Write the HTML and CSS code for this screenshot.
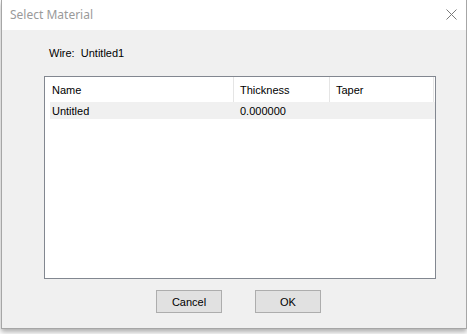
FILE: index.html
```html
<!DOCTYPE html>
<html lang="en">
<head>
    <meta charset="UTF-8">
    <title>Select Material</title>
    <link rel="stylesheet" href="styles.css">
</head>
<body>
    <div class="window">
        <div class="titlebar">
            <span class="title">Select Material</span>
            <svg class="close" width="11" height="11" viewBox="0 0 11 11">
                <path d="M0.5 0.5 L10.5 10.5 M10.5 0.5 L0.5 10.5" stroke="#7a7a7a" stroke-width="1" fill="none"/>
            </svg>
        </div>
        <div class="content">
            <div class="wire">Wire:&nbsp; Untitled1</div>
            <div class="listbox">
                <div class="list-header">
                    <div class="col-head first">Name</div>
                    <div class="col-head">Thickness</div>
                    <div class="col-head">Taper</div>
                </div>
                <div class="list-row selected">
                    <div class="cell first">Untitled</div>
                    <div class="cell">0.000000</div>
                    <div class="cell"></div>
                </div>
            </div>
            <div class="buttons">
                <button class="btn">Cancel</button>
                <button class="btn">OK</button>
            </div>
        </div>
    </div>
</body>
</html>
```

FILE: styles.css
```css
html, body {
    margin: 0;
    padding: 0;
    background-color: #ffffff;
}

body {
    font-family: "Liberation Sans", Arial, sans-serif;
    font-size: 11px;
    color: #000000;
    height: 334px;
    overflow: hidden;
}

.window {
    margin-left: 1px;
    width: 464px;
    height: 328px;
    border: 1px solid #a6a6a6;
    border-top: none;
    background-color: #f0f0f0;
    box-shadow: 0 3px 5px rgba(0, 0, 0, 0.32);
    display: flex;
    flex-direction: column;
}

.titlebar {
    height: 30px;
    background-color: #ffffff;
    display: flex;
    align-items: center;
    justify-content: space-between;
    padding: 0 9px 0 8px;
}

.title {
    font-family: "Noto Sans", "Open Sans", sans-serif;
    font-size: 12px;
    color: #9a9a9a;
    padding-bottom: 1px;
}

.close {
    display: block;
    margin-bottom: 2px;
}

.content {
    flex: 1;
    display: flex;
    flex-direction: column;
}

.wire {
    margin: 17px 0 0 47px;
    line-height: 13px;
}

.listbox {
    margin: 16px 0 0 42px;
    width: 390px;
    height: 201px;
    border: 1px solid #828790;
    background-color: #ffffff;
}

.list-header {
    display: grid;
    grid-template-columns: 189px 96px 104px;
    height: 25px;
}

.col-head {
    border-right: 1px solid #e5e5e5;
    padding: 2px 0 0 6px;
    line-height: 23px;
}

.col-head.first {
    padding-left: 7px;
}

.list-row {
    display: grid;
    grid-template-columns: 184px 96px 104px;
    margin-left: 5px;
    height: 17px;
}

.list-row.selected {
    background-color: #f0f0f0;
}

.cell {
    padding: 1px 0 0 6px;
    line-height: 16px;
}

.cell.first {
    padding-left: 2px;
}

.buttons {
    display: flex;
    gap: 33px;
    margin: 11px 0 0 154px;
}

.btn {
    width: 66px;
    height: 23px;
    padding: 0;
    font-family: "Liberation Sans", Arial, sans-serif;
    font-size: 11px;
    color: #000000;
    background-color: #e1e1e1;
    border: 1px solid #adadad;
    border-radius: 0;
}
```
